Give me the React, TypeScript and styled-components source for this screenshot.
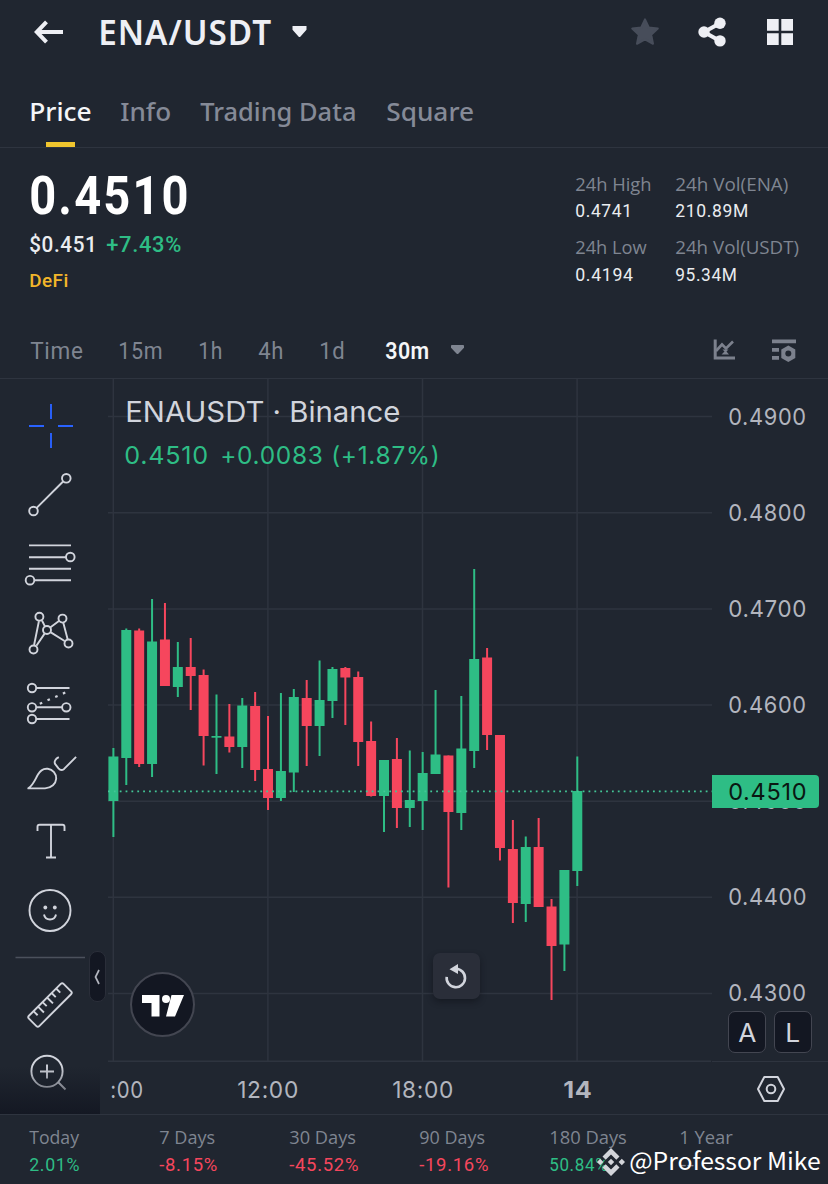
import React, { useLayoutEffect, useRef, useState } from 'react';
import styled, { createGlobalStyle } from 'styled-components';

const color = {
  bg: '#202630',
  line: '#2e343f',
  text: '#eaecef',
  muted: '#7f8591',
  green: '#2ebd85',
  red: '#f6465d',
  yellow: '#f0c52e',
  tag: '#f3b62a',
  chartText: '#b2b5be',
  icon: '#d1d4dc',
};

const plex = "'Open Sans', 'Noto Sans', sans-serif";
const plexMedium = "'Noto Sans', 'Open Sans', sans-serif";
const din = "Roboto, 'Liberation Sans', sans-serif";
const inter = "Inter, 'Liberation Sans', sans-serif";

const GlobalStyle = createGlobalStyle`
  * { box-sizing: border-box; }
  html, body { margin: 0; padding: 0; background: ${color.bg}; }
`;

type FaceProps = { $font: string; $size: number; $weight: number; $color: string; $spacing: number; $line: number };

const FitBox = styled.span<{ $width: number; $line: number }>`
  display: block;
  flex: none;
  width: ${(p) => p.$width}px;
  height: ${(p) => p.$line}px;
  white-space: nowrap;
`;

const Face = styled.span<FaceProps>`
  display: inline-block;
  vertical-align: top;
  transform-origin: 0 50%;
  font-family: ${(p) => p.$font};
  font-size: ${(p) => p.$size}px;
  font-weight: ${(p) => p.$weight};
  line-height: ${(p) => p.$line}px;
  letter-spacing: ${(p) => p.$spacing}px;
  color: ${(p) => p.$color};
`;

type FitProps = {
  children: string;
  width: number;
  size: number;
  font?: string;
  weight?: number;
  tint?: string;
  spacing?: number;
  line?: number;
};

function Fit({ children, width, size, font = din, weight = 400, tint = color.text, spacing = 0, line = 26 }: FitProps) {
  const ref = useRef<HTMLSpanElement>(null);
  const [scale, setScale] = useState(1);
  useLayoutEffect(() => {
    if (ref.current) setScale((width + 1.2) / (ref.current.offsetWidth - spacing));
  }, [children, width, spacing]);
  return (
    <FitBox $width={width} $line={line}>
      <Face
        ref={ref}
        $font={font}
        $size={size}
        $weight={weight}
        $color={tint}
        $spacing={spacing}
        $line={line}
        style={{ transform: `translateX(-0.8px) scaleX(${scale})` }}
      >
        {children}
      </Face>
    </FitBox>
  );
}

const Screen = styled.main`
  position: relative;
  display: flex;
  flex-direction: column;
  width: 828px;
  height: 1184px;
  overflow: hidden;
  background: ${color.bg};
`;

const Header = styled.header`
  display: flex;
  align-items: center;
  height: 64px;
  padding: 0 35px 0 34px;
  svg { display: block; flex: none; }
`;
const Pair = styled.div`
  display: flex;
  align-items: center;
  gap: 20px;
  margin-left: 36px;
`;
const HeaderActions = styled.div`
  display: flex;
  align-items: center;
  gap: 38px;
  margin-left: auto;
`;
const ShareSlot = styled.div`
  margin-right: 1px;
`;

const Tabs = styled.nav`
  display: flex;
  gap: 30px;
  height: 84px;
  padding-left: 30px;
  border-bottom: 1px solid ${color.line};
`;
const Tab = styled.div<{ $active?: boolean }>`
  display: flex;
  flex-direction: column;
  align-items: center;
  justify-content: space-between;
  padding-top: 29px;
  &::after {
    content: '';
    width: 29px;
    height: 5px;
    margin-right: 1px;
    background: ${(p) => (p.$active ? color.yellow : 'transparent')};
  }
`;

const Summary = styled.section`
  display: flex;
  justify-content: space-between;
  height: 174px;
  padding: 0 29.5px 0 30px;
`;
const PriceBlock = styled.div`
  display: flex;
  flex-direction: column;
  padding-top: 17px;
`;
const PriceRow = styled.div`
  display: flex;
  gap: 11px;
  margin: 6px 0 11px;
`;
const Stats = styled.dl`
  display: grid;
  grid-template-columns: 100px 123px;
  grid-template-rows: 63.5px 63.5px;
  margin: 22.5px 0 0;
`;
const Stat = styled.div`
  display: flex;
  flex-direction: column;
  gap: 1.5px;
`;

const Intervals = styled.nav`
  display: flex;
  align-items: center;
  height: 57px;
  padding: 0 32px 0 31px;
  border-bottom: 1px solid ${color.line};
  svg { display: block; flex: none; }
`;
const IntervalList = styled.div`
  display: flex;
  align-items: center;
  gap: 37px;
  padding-top: 3px;
`;
const Current = styled.div`
  display: flex;
  align-items: center;
  gap: 22px;
  margin-left: 5px;
  svg { margin-bottom: 3px; }
`;
const IntervalActions = styled.div`
  display: flex;
  gap: 37px;
  margin-left: auto;
`;

const ChartArea = styled.section`
  position: relative;
  display: flex;
  height: 735px;
`;
const Toolbar = styled.aside`
  position: relative;
  display: flex;
  flex: none;
  width: 108px;
  svg { display: block; }
`;
const Fade = styled.div`
  position: absolute;
  left: 0;
  bottom: 0;
  width: 100px;
  height: 48px;
  background: linear-gradient(rgba(19, 23, 34, 0), rgba(19, 23, 34, 0.92));
`;
const Handle = styled.div`
  position: absolute;
  left: 89px;
  top: 572px;
  display: flex;
  align-items: center;
  justify-content: center;
  width: 17px;
  height: 51px;
  border: 1px solid #2a2e39;
  border-radius: 8px;
  background: #131722;
`;
const Plot = styled.div`
  position: relative;
  display: flex;
  flex-direction: column;
  flex: none;
  width: 604px;
  svg { display: block; }
`;
const Legend = styled.div`
  position: absolute;
  left: 17px;
  top: 15px;
  display: flex;
  flex-direction: column;
  gap: 11px;
`;
const LegendTitle = styled.div`
  padding-left: 1px;
`;
const LegendValues = styled.div`
  display: flex;
  gap: 12.5px;
`;
const TvBadge = styled.div`
  position: absolute;
  left: 22px;
  top: 593px;
  display: flex;
  align-items: center;
  justify-content: center;
  width: 65px;
  height: 65px;
  border: 2px solid #434651;
  border-radius: 50%;
  background: #131722;
  svg { margin-top: 2px; }
`;
const ResetButton = styled.button`
  position: absolute;
  left: 325px;
  top: 574px;
  display: flex;
  align-items: center;
  justify-content: center;
  width: 47px;
  height: 46px;
  padding: 2px 1px 0 0;
  border: 0;
  border-radius: 7px;
  background: #2a2e39;
  box-shadow: 0 3px 6px rgba(10, 13, 20, 0.45);
`;
const TimeAxis = styled.div`
  display: flex;
  gap: 95px;
  height: 52px;
  padding: 12.5px 0 0 3px;
`;
const AxisDay = styled.div`
  margin-left: 16px;
`;

const PriceAxis = styled.div`
  position: relative;
  display: flex;
  flex-direction: column;
  width: 116px;
`;
const Scale = styled.div`
  display: flex;
  flex-direction: column;
  gap: 66.15px;
  height: 632px;
  padding: 22.5px 0 0 17px;
`;
const LastPrice = styled.div`
  position: absolute;
  left: 0;
  top: 396px;
  display: flex;
  align-items: center;
  width: 106.5px;
  height: 33px;
  padding-left: 17px;
  border-radius: 0 4px 4px 0;
  background: ${color.green};
`;
const ModeRow = styled.div`
  display: flex;
  gap: 8px;
  height: 50px;
  padding-left: 16px;
`;
const ModeButton = styled.button`
  display: flex;
  align-items: center;
  justify-content: center;
  width: 38px;
  height: 42px;
  padding: 1px 0 0;
  border: 1.5px solid #434651;
  border-radius: 7px;
  background: #131722;
`;
const AxisSettings = styled.div`
  display: flex;
  align-items: center;
  justify-content: center;
  height: 53px;
  border-top: 1px solid ${color.line};
  padding: 1px 0 0 2px;
`;

const Performance = styled.footer`
  display: grid;
  grid-template-columns: repeat(6, 130px);
  height: 70px;
  padding: 9px 0 0 30px;
  border-top: 1px solid ${color.line};
`;
const Period = styled.div`
  display: flex;
  flex-direction: column;
  gap: 2px;
`;
const Watermark = styled.div`
  position: absolute;
  left: 597px;
  bottom: 7px;
  display: flex;
  align-items: center;
  gap: 4.5px;
`;
const WatermarkText = styled.div`
  margin-top: -4px;
`;

const tabs = [
  { label: 'Price', width: 61, active: true },
  { label: 'Info', width: 50 },
  { label: 'Trading Data', width: 155.5 },
  { label: 'Square', width: 87 },
];

const stats = [
  { label: '24h High', lw: 75, value: '0.4741', vw: 56 },
  { label: '24h Vol(ENA)', lw: 112, value: '210.89M', vw: 72 },
  { label: '24h Low', lw: 70, value: '0.4194', vw: 57 },
  { label: '24h Vol(USDT)', lw: 123, value: '95.34M', vw: 61 },
];

const intervals = [
  { label: 'Time', width: 51 },
  { label: '15m', width: 43 },
  { label: '1h', width: 23 },
  { label: '4h', width: 24 },
  { label: '1d', width: 24 },
];

const levels = ['0.4900', '0.4800', '0.4700', '0.4600', '0.4500', '0.4400', '0.4300'];

const periods = [
  { label: 'Today', lw: 49, value: '2.01%', vw: 49 },
  { label: '7 Days', lw: 55, value: '-8.15%', vw: 57 },
  { label: '30 Days', lw: 66, value: '-45.52%', vw: 68 },
  { label: '90 Days', lw: 65, value: '-19.16%', vw: 68 },
  { label: '180 Days', lw: 76, value: '50.84%', vw: 57 },
  { label: '1 Year', lw: 52, value: '--', vw: 14 },
];

const valueTint = (value: string) => {
  if (value === '--') return color.muted;
  return value.startsWith('-') ? color.red : color.green;
};

/* body top, body bottom, wick top, wick bottom, rising */
const candles: [number, number, number, number, boolean][] = [
  [756.5, 801, 748, 837, true],
  [630, 758, 628.5, 785, true],
  [630.5, 764, 628.5, 767, false],
  [641.5, 764, 599, 777, true],
  [639.5, 686, 603, 686, false],
  [667, 687, 642, 697, true],
  [667, 676, 638, 710, false],
  [675, 736, 669.5, 765.5, false],
  [736, 737.7, 694.5, 774, true],
  [736.5, 747, 704, 752.5, false],
  [705.5, 747, 698, 768, true],
  [706, 770, 692, 781, false],
  [769, 798, 716, 810, false],
  [771, 798, 693, 801, true],
  [697, 772.5, 689, 792, true],
  [698, 726, 680, 766, false],
  [700, 726, 660.5, 756, true],
  [669, 701, 667, 718, true],
  [668, 677.5, 667, 725, false],
  [677, 742, 671.5, 766, false],
  [741, 796, 721.5, 796.5, false],
  [760, 796, 760, 832, true],
  [759, 808, 738, 828, false],
  [800, 808, 750.5, 827, true],
  [773, 801, 752, 830, true],
  [754.5, 774, 690, 774, true],
  [755.5, 812, 755.5, 887.5, false],
  [748.5, 813, 696, 830, true],
  [659, 751, 569, 768, true],
  [657.5, 735, 648, 750, false],
  [735, 848, 735, 860.5, false],
  [849, 903, 820, 923, false],
  [847, 904, 836.5, 922, true],
  [847, 907, 818, 907, false],
  [906.5, 946, 899, 1000, false],
  [870, 944.5, 870, 971, true],
  [791, 871, 756.5, 886, true],
];

function CandleChart() {
  return (
    <svg width="604" height="683" viewBox="108 379 604 683">
      <g stroke={color.line} strokeWidth="1.5">
        {levels.map((l, i) => (
          <path key={l} d={`M108 ${416.6 + i * 96.15}H712`} />
        ))}
        {[113.3, 267.9, 422.5, 577.1].map((x) => (
          <path key={x} d={`M${x} 379V1061`} />
        ))}
      </g>
      {candles.map(([top, bottom, high, low, up], i) => {
        const x = 113.4 + i * 12.886;
        return (
          <g key={i} fill={up ? color.green : color.red}>
            <rect x={x - 1} y={high} width="2" height={low - high} />
            <rect x={x - 5} y={top} width="10" height={bottom - top} />
          </g>
        );
      })}
      <path d="M108 791.4H712" stroke="#43c696" strokeWidth="1.6" strokeDasharray="1.8 4.06" />
      <path d="M108 1061.3H711" stroke={color.line} strokeWidth="1.4" />
    </svg>
  );
}

function DrawingTools() {
  return (
    <svg width="108" height="735" viewBox="0 379 108 735" fill="none" stroke={color.icon} strokeWidth="1.9">
      <path d="M51 404v15M51 433v15M29 426h15M58 426h15" stroke="#2962ff" />
      <g>
        <circle cx="33.5" cy="511" r="4.3" />
        <circle cx="66.3" cy="478.3" r="4.3" />
        <path d="M36.7 507.8 63.1 481.5" />
      </g>
      <g>
        <path d="M29 545.4h42M29 557.2h37M29 568.7h42M34.5 580.2H71" />
        <circle cx="70.3" cy="557" r="4.3" />
        <circle cx="30" cy="580.2" r="4.3" />
      </g>
      <g>
        <path d="M38.9 621.3 34.1 645M42 620.5l2.8 5.7M50.2 627.4l8.7-6.3M63.3 622.8l4.4 16.6M50.8 632.4l13.8 8.6M44.6 633.6l-8.2 12.2" />
        <circle cx="39.4" cy="616.8" r="4" />
        <circle cx="62.5" cy="618.6" r="4" />
        <circle cx="47" cy="630" r="4" />
        <circle cx="33.5" cy="649.5" r="4" />
        <circle cx="68.5" cy="643.5" r="4" />
      </g>
      <g>
        <path d="M36.5 688H69.5M36.5 707.3H62M36.5 719H69.5" />
        <circle cx="32" cy="688" r="4.2" />
        <circle cx="32" cy="707.3" r="4.2" />
        <circle cx="66.3" cy="707.3" r="4.2" />
        <circle cx="32" cy="719" r="4.2" />
        <path d="M39.8 703.7 68 691.4" strokeDasharray="2.6 5.8" strokeWidth="2.2" />
      </g>
      <g strokeLinejoin="round">
        <path d="M28.3 788.4c5-3.4 6.6-8.5 9.5-13.6 2.2-4.2 6-6.5 10-6 5 .6 8.7 5 8.4 10-.4 5-4.5 9.2-11.2 9.6z" />
        <path d="M58.8 757.2c-3.5 1.7-5 4.5-3.6 7l3.3 4.2c1.5 1.8 3.8 2 5.6.5l12-12" />
      </g>
      <path d="M37.5 831v-4.3c0-1.3.7-2 2-2h23c1.3 0 2 .7 2 2v4.3M51 824.7v33M46 857.5h10" />
      <g>
        <circle cx="50" cy="910.5" r="20.5" />
        <circle cx="45.3" cy="907.5" r="1.9" fill={color.icon} stroke="none" />
        <circle cx="54.8" cy="907.5" r="1.9" fill={color.icon} stroke="none" />
        <path d="M44 914.5c1.3 6.6 10.7 6.6 12 0" />
      </g>
      <path d="M15.5 957.6H85" stroke="#4b515c" strokeWidth="1.5" />
      <g transform="translate(50 1005) rotate(-45)">
        <rect x="-24.5" y="-7.3" width="49" height="14.6" rx="2" />
        <path d="M-16 -7v5.5M-9.6 -7v8M-3.2 -7v5.5M3.2 -7v8M9.6 -7v5.5M16 -7v5.5" />
      </g>
      <g>
        <circle cx="47" cy="1071.3" r="15.6" />
        <path d="M47 1064.5v14M40 1071.5h14M58 1082l7.5 7.5" />
      </g>
    </svg>
  );
}

export default function App() {
  return (
    <>
      <GlobalStyle />
      <Screen>
        <Header>
          <svg width="29" height="24" viewBox="0 0 29 24" fill="none" stroke="#eeeff4" strokeWidth="4">
            <path d="M2.5 12H29M12.5 1.8 2.800 12l9.700 10.200" />
          </svg>
          <Pair>
            <Fit width={172} size={34} font={plexMedium} weight={600} line={46} tint="#eeeff4" spacing={1}>ENA/USDT</Fit>
            <svg width="17" height="13" viewBox="0 0 17 13"><path d="M2.300 0h12.400c.8 0 1.100.5.8 1.200v2.600L9.300 10.700c-.5.5-1.100.5-1.600 0L1.500 3.800V1.200C1.300.5 1.500 0 2.300 0z" fill="#eeeff4" /></svg>
          </Pair>
          <HeaderActions>
            <svg width="30" height="30" viewBox="0 0 30 30">
              <path d="m15 2.400 3.800 8.100 9 1.100-6.600 6.100 1.800 9.100-8-4.500-8 4.500 1.800-9.100-6.600-6.100 9-1.100z" fill="#474d5a" stroke="#474d5a" strokeWidth="2" strokeLinejoin="round" />
            </svg>
            <ShareSlot>
              <svg width="30" height="30" viewBox="0 0 30 30" fill="#eeeff4">
                <path d="M6 15 22 6.200M6 15l16 8.900" stroke="#eeeff4" strokeWidth="4" />
                <circle cx="6" cy="15" r="5.700" /><circle cx="22" cy="6.200" r="5.700" /><circle cx="22" cy="23.900" r="5.700" />
              </svg>
            </ShareSlot>
            <svg width="26" height="26" viewBox="0 0 26 26" fill="#eeeff4">
              <path d="M0 0h11.700v11.700H0zM14.300 0H26v11.700H14.300zM0 14.300h11.700V26H0zM14.300 14.300H26V26H14.300z" />
            </svg>
          </HeaderActions>
        </Header>

        <Tabs>
          {tabs.map((t) => (
            <Tab key={t.label} $active={t.active}>
              <Fit width={t.width} size={25} font={plexMedium} weight={500} line={36} tint={t.active ? '#f5f6f8' : '#858a97'}>
                {t.label}
              </Fit>
            </Tab>
          ))}
        </Tabs>

        <Summary>
          <PriceBlock>
            <Fit width={158} size={54.5} weight={700} line={60} tint="#ffffff" spacing={2.5}>0.4510</Fit>
            <PriceRow>
              <Fit width={66} size={22.5} weight={500} spacing={0.7}>$0.451</Fit>
              <Fit width={74} size={22.5} weight={500} tint={color.green} spacing={0.7}>+7.43%</Fit>
            </PriceRow>
            <Fit width={38} size={19} tint={color.tag} weight={500} spacing={0.5}>DeFi</Fit>
          </PriceBlock>
          <Stats>
            {stats.map((s) => (
              <Stat key={s.label}>
                <Fit width={s.lw} size={19} font={plex} tint={color.muted}>{s.label}</Fit>
                <Fit width={s.vw} size={19} spacing={0.7}>{s.value}</Fit>
              </Stat>
            ))}
          </Stats>
        </Summary>

        <Intervals>
          <IntervalList>
            {intervals.map((t) => (
              <Fit key={t.label} width={t.width} size={23} tint={color.muted} spacing={0.7}>{t.label}</Fit>
            ))}
            <Current>
              <Fit width={43} size={23} weight={600} tint="#f5f6f8" spacing={0.5}>30m</Fit>
              <svg width="13" height="10" viewBox="0 0 13 10"><path d="M.8 0h11.400c.5 0 .8.4.8.8v2L7.300 8.700c-.5.4-1.100.4-1.600 0L0 2.800v-2C0 .4.3 0 .8 0z" fill={color.muted} /></svg>
            </Current>
          </IntervalList>
          <IntervalActions>
            <svg width="22" height="22" viewBox="0 0 22 22" fill="none" stroke="#7c818d" strokeWidth="3">
              <path d="M2.200.5v18.600H22" />
              <path d="m3 12 6-6.500 4 4L20 2.500" strokeWidth="2.600" />
              <path d="M8.500 15.500h7.500l-2.500-3 2-2h-6l2 2z" fill="#7c818d" stroke="none" />
            </svg>
            <svg width="24" height="23" viewBox="0 0 24 23">
              <path d="M0 .5h24v3.800H0zM0 9h7v3.800H0zM0 17h7v3.800H0z" fill="#7c818d" />
              <path d="m16.300 6.500 7 4v8.400l-7 4-7-4v-8.400z" fill="#7c818d" />
              <circle cx="16.300" cy="14.600" r="3" fill={color.bg} />
            </svg>
          </IntervalActions>
        </Intervals>

        <ChartArea>
          <Toolbar>
            <DrawingTools />
            <Fade />
            <Handle>
              <svg width="7" height="16" viewBox="0 0 7 16" fill="none" stroke="#b2b5be" strokeWidth="1.7"><path d="M5 1 1.500 8 5 15" /></svg>
            </Handle>
          </Toolbar>
          <Plot>
            <CandleChart />
            <TimeAxis>
              <Fit width={32} size={23.5} font={inter} tint={color.chartText} spacing={0.7} line={30}>:00</Fit>
              <Fit width={60} size={23.5} font={inter} tint={color.chartText} spacing={0.7} line={30}>12:00</Fit>
              <Fit width={60} size={23.5} font={inter} tint={color.chartText} spacing={0.7} line={30}>18:00</Fit>
              <AxisDay>
                <Fit width={27} size={23.5} font={inter} weight={700} tint={color.chartText} spacing={0.7} line={30}>14</Fit>
              </AxisDay>
            </TimeAxis>
            <Legend>
              <LegendTitle>
                <Fit width={274} size={28} font={inter} tint="#d1d4dc" line={36}>ENAUSDT · Binance</Fit>
              </LegendTitle>
              <LegendValues>
                <Fit width={83} size={24} font={inter} tint={color.green} line={30} spacing={0.7}>0.4510</Fit>
                <Fit width={218} size={24} font={inter} tint={color.green} line={30} spacing={0.7}>+0.0083 (+1.87%)</Fit>
              </LegendValues>
            </Legend>
            <TvBadge>
              <svg width="42" height="22" viewBox="0 0 42 22" fill="#fff">
                <path d="M0 0h17.500v21.500H9.500V8H0zM29.500 0H42l-9 21.500h-9z" />
                <circle cx="24" cy="4" r="4" />
              </svg>
            </TvBadge>
            <ResetButton aria-label="Reset chart">
              <svg width="24" height="26" viewBox="0 0 24 26" fill="none">
                <path d="M2.700 12.800a9.200 9.200 0 1 0 9.300-8" stroke="#d1d4dc" strokeWidth="2.600" />
                <path d="M5.500 5.200 14 0v10z" fill="#d1d4dc" />
              </svg>
            </ResetButton>
          </Plot>
          <PriceAxis>
            <Scale>
              {levels.map((l) => (
                <Fit key={l} width={77} size={23.5} font={inter} tint={color.chartText} line={30} spacing={0.7}>{l}</Fit>
              ))}
            </Scale>
            <ModeRow>
              <ModeButton><Fit width={17} size={26} font={inter} tint="#d1d4dc" line={30}>A</Fit></ModeButton>
              <ModeButton><Fit width={14} size={26} font={inter} tint="#d1d4dc" line={30}>L</Fit></ModeButton>
            </ModeRow>
            <AxisSettings>
              <svg width="30" height="26" viewBox="0 0 30 26" fill="none" stroke={color.icon} strokeWidth="2">
                <path d="M8.300 1h13.400L28 13l-6.300 12H8.300L2 13z" strokeLinejoin="round" />
                <circle cx="15" cy="13" r="4.300" />
              </svg>
            </AxisSettings>
            <LastPrice>
              <Fit width={77} size={23.5} font={inter} tint="#0a1712" line={30} spacing={0.7}>0.4510</Fit>
            </LastPrice>
          </PriceAxis>
        </ChartArea>

        <Performance>
          {periods.map((p) => (
            <Period key={p.label}>
              <Fit width={p.lw} size={19} font={plex} tint={color.muted}>{p.label}</Fit>
              <Fit width={p.vw} size={18.5} tint={valueTint(p.value)} spacing={0.7}>{p.value}</Fit>
            </Period>
          ))}
        </Performance>

        <Watermark>
          <svg width="28" height="28" viewBox="0 0 28 28" fill="#d3d5da">
            <path d="m14 0 8.500 8.500-3.200 3.200L14 6.400l-5.300 5.300-3.200-3.200zM14 28l8.500-8.500-3.200-3.200L14 21.600l-5.300-5.300-3.200 3.200zM3.200 10.800 6.400 14l-3.200 3.200L0 14zM24.800 10.800 28 14l-3.200 3.200-3.200-3.200zM14 10.800l3.200 3.200-3.200 3.200-3.200-3.200z" />
          </svg>
          <WatermarkText>
            <Fit width={190} size={24} font="'Noto Sans CJK SC', 'Noto Sans', sans-serif" weight={400} tint="#ffffff" line={34}>@Professor Mike</Fit>
          </WatermarkText>
        </Watermark>
      </Screen>
    </>
  );
}
